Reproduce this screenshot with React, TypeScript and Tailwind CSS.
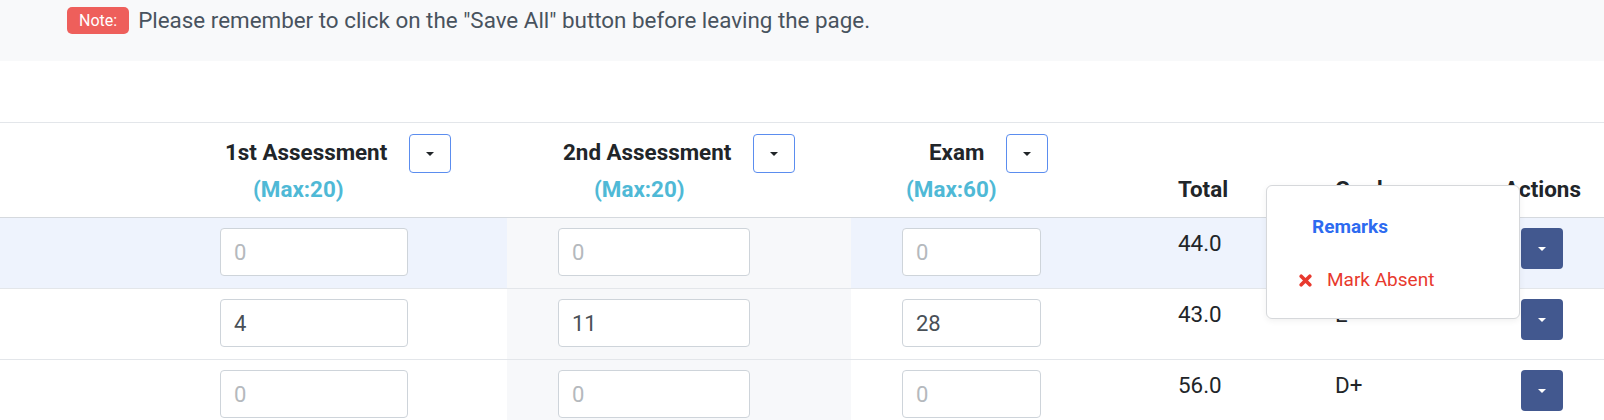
import * as React from 'react';

// 헤더/액션 버튼 안의 작은 삼각형
function Caret({ color }: { color: string }) {
  return (
    <svg width="8" height="4" viewBox="0 0 8 4">
      <path d="M0 0h8L4 4z" fill={color} />
    </svg>
  );
}

function TimesIcon() {
  return (
    <svg width="13" height="13" viewBox="0 0 13 13">
      <path d="M2.2 2.2L10.8 10.8M10.8 2.2L2.2 10.8" stroke="#e8392e" strokeWidth="3.6" strokeLinecap="round" />
    </svg>
  );
}

interface Row {
  values: string[];
  total: string;
  grade: string;
  highlight?: boolean;
}

const rows: Row[] = [
  { values: ['', '', ''], total: '44.0', grade: 'D', highlight: true },
  { values: ['4', '11', '28'], total: '43.0', grade: 'E' },
  { values: ['', '', ''], total: '56.0', grade: 'D+' },
];

const gridCols = 'grid grid-cols-[180px_327px_344px_309px_145px_185px_114px]';

function HeaderButton() {
  return (
    <button className="ml-[22px] -mt-[3px] flex h-[39px] w-[42px] shrink-0 items-center justify-center rounded-[4px] border border-[#5b8def] bg-white">
      <Caret color="#212529" />
    </button>
  );
}

function AssessmentHeader({ title, max, titlePad, maxPad }: { title: string; max: string; titlePad: string; maxPad: string }) {
  return (
    <div className="flex flex-col justify-end pb-[13px]">
      <div className={`flex items-start ${titlePad}`}>
        <span className="text-[22.4px] font-bold leading-[30px] text-[#212529]">{title}</span>
        <HeaderButton />
      </div>
      <div className={`mt-[1px] ${maxPad} text-[22.4px] font-bold leading-[30px] text-[#4fb9d6]`}>{max}</div>
    </div>
  );
}

function ScoreInput({ value, className }: { value: string; className: string }) {
  return (
    <input
      readOnly
      value={value}
      placeholder="0"
      className={`h-[48px] rounded-[4px] border border-[#ced4da] bg-white px-[13px] text-[22px] text-[#495057] outline-none placeholder:text-[#b5b9bd] ${className}`}
    />
  );
}

export default function App() {
  return (
    <div className="w-[1604px] h-[420px] overflow-hidden bg-white font-['Roboto',sans-serif]">
      {/* 안내 배너 */}
      <div className="flex h-[61px] items-start gap-[9px] bg-[#f8f9fa] pl-[67px] pt-[7px]">
        <span className="h-[27px] rounded-[5px] bg-[#ee5f5b] px-[12px] text-[16px] leading-[27px] text-white">Note:</span>
        <span className="text-[22.4px] leading-[27px] text-[#48535e]">
          Please remember to click on the "Save All" button before leaving the page.
        </span>
      </div>

      <div className="h-[61px]" />

      <div className="relative">
        {/* 헤더 */}
        <div className={`${gridCols} h-[96px] border-y border-t-[#e3e6ea] border-b-[#d5d9de]`}>
          <div />
          <AssessmentHeader title="1st Assessment" max="(Max:20)" titlePad="pl-[45px]" maxPad="pl-[73px]" />
          <AssessmentHeader title="2nd Assessment" max="(Max:20)" titlePad="pl-[56px]" maxPad="pl-[87px]" />
          <AssessmentHeader title="Exam" max="(Max:60)" titlePad="pl-[78px]" maxPad="pl-[55px]" />
          <div className="flex flex-col justify-end pb-[13px] pl-[18px] text-[22.4px] font-bold leading-[30px] text-[#212529]">Total</div>
          <div className="flex flex-col justify-end pb-[13px] pl-[30px] text-[22.4px] font-bold leading-[30px] text-[#212529]">Grade</div>
          <div className="flex flex-col justify-end pb-[13px] pl-[14px] text-[22.4px] font-bold leading-[30px] text-[#212529]">Actions</div>
        </div>

        {/* 점수 행 */}
        {rows.map((row, i) => (
          <div
            key={i}
            className={`${gridCols} h-[71px] border-b border-[#e3e6ea] ${row.highlight ? 'bg-[#eef3fd]' : 'bg-white'}`}
          >
            <div />
            <div className="pl-[40px] pt-[10px]">
              <ScoreInput value={row.values[0]} className="w-[188px]" />
            </div>
            <div className="bg-[#f7f8fa] pl-[51px] pt-[10px]">
              <ScoreInput value={row.values[1]} className="w-[192px]" />
            </div>
            <div className="pl-[51px] pt-[10px]">
              <ScoreInput value={row.values[2]} className="w-[139px]" />
            </div>
            <div className="pl-[18px] pt-[10px] text-[22.4px] leading-[30px] text-[#212529]">{row.total}</div>
            <div className="pl-[30px] pt-[10px] text-[22.4px] leading-[30px] text-[#212529]">{row.grade}</div>
            <div className="pl-[31px] pt-[10px]">
              <button className="flex h-[41px] w-[42px] items-center justify-center rounded-[4px] bg-[#42588f]">
                <Caret color="#ffffff" />
              </button>
            </div>
          </div>
        ))}

        {/* 액션 드롭다운 메뉴 */}
        <div className="absolute left-[1266px] top-[63px] h-[134px] w-[254px] rounded-[6px] border border-[#d6d8db] bg-white shadow-[0_2px_6px_rgba(0,0,0,0.06)]">
          <div className="pl-[45px] pt-[26px] text-[19px] font-bold leading-[30px] text-[#2d6bf0]">Remarks</div>
          <div className="mt-[23px] flex items-center pl-[32px] text-[19px] leading-[30px] text-[#e8392e]">
            <TimesIcon />
            <span className="ml-[15px]">Mark Absent</span>
          </div>
        </div>
      </div>
    </div>
  );
}
